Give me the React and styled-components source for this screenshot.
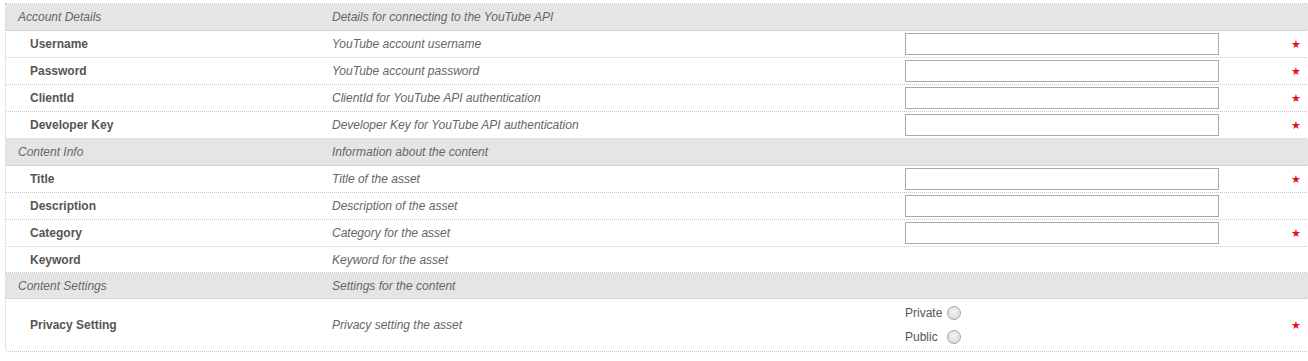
import React from "react";
import styled, { createGlobalStyle } from "styled-components";

const Global = createGlobalStyle`
  html, body { margin: 0; padding: 0; background: #fff; }
  body { font-family: "Liberation Sans", Arial, sans-serif; font-size: 12px; color: #555; }
`;

const Page = styled.div`
  padding: 3px 0 0 5px;
`;

const Table = styled.div`
  border-top: 1px dotted #c4c4c4;
  border-left: 1px dotted #c4c4c4;
  border-bottom-left-radius: 4px;
  width: 1303px;
`;

const Row = styled.div`
  display: grid;
  grid-template-columns: 314px 575px 365px 1fr;
  align-items: center;
  height: ${(p) => p.$h || 26}px;
  border-bottom: 1px dotted #c4c4c4;
  background: ${(p) => (p.$section ? "#e5e5e5" : "#fff")};
  &:last-child { border-bottom-left-radius: 4px; }
`;

const SectionTitle = styled.div`
  padding-left: 12px;
  font-style: italic;
  color: #666;
`;

const FieldLabel = styled.div`
  padding-left: 24px;
  font-weight: bold;
  color: #555;
`;

const Desc = styled.div`
  padding-left: 12px;
  font-style: italic;
  color: #666;
`;

const Control = styled.div`
  padding-left: 10px;
  display: flex;
  align-items: center;
`;

const TextInput = styled.input`
  box-sizing: border-box;
  width: 314px;
  height: 22px;
  margin: 0;
  border: 1px solid #aaa;
  background: #fff;
  padding: 2px 4px;
  font: inherit;
  outline: none;
`;

const Required = styled.div`
  text-align: right;
  padding-right: 8px;
  color: #e3141c;
  font-size: 11px;
  line-height: 1;
`;

const RadioGrid = styled.div`
  display: grid;
  grid-template-columns: auto auto;
  column-gap: 5px;
  row-gap: 8px;
  align-items: center;
  color: #555;
`;

const Radio = styled.input.attrs({ type: "radio" })`
  appearance: none;
  -webkit-appearance: none;
  margin: 0;
  width: 14px;
  height: 14px;
  border-radius: 50%;
  border: 1px solid #a8a8a8;
  background: radial-gradient(circle at 50% 35%, #f4f4f4 0%, #e2e2e2 60%, #d2d2d2 100%);
  box-sizing: border-box;
`;

const RadioLabel = styled.span`
  line-height: 16px;
`;

const sections = [
  {
    title: "Account Details",
    desc: "Details for connecting to the YouTube API",
    fields: [
      { label: "Username", desc: "YouTube account username", input: true, req: true },
      { label: "Password", desc: "YouTube account password", input: true, req: true },
      { label: "ClientId", desc: "ClientId for YouTube API authentication", input: true, req: true },
      { label: "Developer Key", desc: "Developer Key for YouTube API authentication", input: true, req: true },
    ],
  },
  {
    title: "Content Info",
    desc: "Information about the content",
    fields: [
      { label: "Title", desc: "Title of the asset", input: true, req: true },
      { label: "Description", desc: "Description of the asset", input: true },
      { label: "Category", desc: "Category for the asset", input: true, req: true },
      { label: "Keyword", desc: "Keyword for the asset", h: 25 },
    ],
  },
  {
    title: "Content Settings",
    desc: "Settings for the content",
    h: 25,
    fields: [
      { label: "Privacy Setting", desc: "Privacy setting the asset", radio: ["Private", "Public"], req: true, h: 52 },
    ],
  },
];

export default function App() {
  return (
    <>
      <Global />
      <Page>
        <Table>
          {sections.map((s) => (
            <React.Fragment key={s.title}>
              <Row $section $h={s.h}>
                <SectionTitle>{s.title}</SectionTitle>
                <Desc>{s.desc}</Desc>
                <div />
                <div />
              </Row>
              {s.fields.map((f) => (
                <Row key={f.label} $h={f.h}>
                  <FieldLabel>{f.label}</FieldLabel>
                  <Desc>{f.desc}</Desc>
                  <Control>
                    {f.input && <TextInput type="text" />}
                    {f.radio && (
                      <RadioGrid>
                        {f.radio.map((r) => (
                          <React.Fragment key={r}>
                            <RadioLabel>{r}</RadioLabel>
                            <Radio name={f.label} />
                          </React.Fragment>
                        ))}
                      </RadioGrid>
                    )}
                  </Control>
                  <Required>{f.req ? "★" : ""}</Required>
                </Row>
              ))}
            </React.Fragment>
          ))}
        </Table>
      </Page>
    </>
  );
}
